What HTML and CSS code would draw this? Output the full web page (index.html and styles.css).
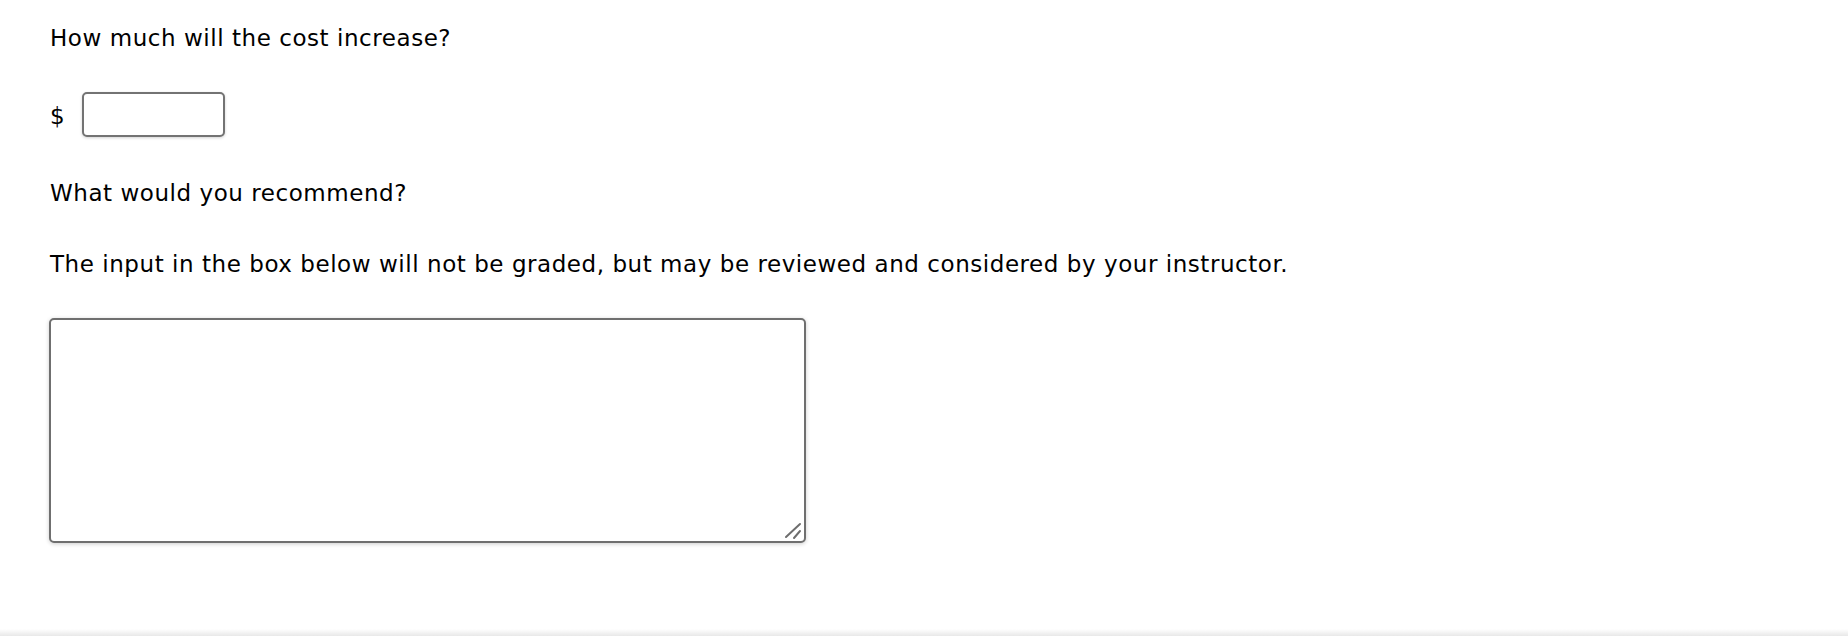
FILE: index.html
```html
<!DOCTYPE html>
<html lang="en">
<head>
<meta charset="utf-8">
<title>Question</title>
<link rel="stylesheet" href="styles.css">
</head>
<body>
<main class="page">
  <p class="prompt">How much will the cost increase?</p>
  <div class="answer-row">
    <span class="currency">$</span>
    <input class="num-input" type="text" aria-label="Cost increase">
  </div>
  <p class="prompt prompt-second">What would you recommend?</p>
  <p class="prompt prompt-note">The input in the box below will not be graded, but may be reviewed and considered by your instructor.</p>
  <div class="comment-wrap">
    <textarea class="comment-box" aria-label="Recommendation"></textarea>
    <svg class="grip" width="20" height="20" viewBox="0 0 20 20" aria-hidden="true">
      <line x1="2" y1="16" x2="16" y2="3" stroke="#6e6e6e" stroke-width="2" stroke-linecap="round"/>
      <line x1="10" y1="17" x2="16" y2="10" stroke="#6e6e6e" stroke-width="2" stroke-linecap="round"/>
    </svg>
  </div>
</main>
<div class="bottom-shade"></div>
</body>
</html>
```

FILE: styles.css
```css
html, body {
  margin: 0;
  padding: 0;
  height: 100%;
}
body {
  background: #ffffff;
  color: #000000;
  font-family: "DejaVu Sans", Verdana, sans-serif;
  font-size: 23px;
  letter-spacing: 0.55px;
  display: flex;
  flex-direction: column;
  min-height: 100vh;
}
.page {
  padding: 25px 50px 0;
  flex: 1;
  display: flex;
  flex-direction: column;
  align-items: flex-start;
}
.prompt {
  margin: 0;
  line-height: 27px;
}
.answer-row {
  display: flex;
  align-items: center;
  gap: 17px;
  margin-top: 40px;
  height: 45px;
}
.currency {
  line-height: 27px;
  margin-top: 4px;
}
.num-input {
  box-sizing: border-box;
  width: 143px;
  height: 45px;
  border: 2px solid #737373;
  border-radius: 5px;
  box-shadow: 0 1px 3px rgba(0,0,0,0.18);
  background: #fff;
  margin: 0;
  padding: 0 6px;
  font: inherit;
}
.prompt-second {
  margin-top: 43px;
}
.prompt-note {
  margin-top: 44px;
}
.comment-wrap {
  position: relative;
  margin: 40px 0 0 -1px;
  width: 757px;
  height: 225px;
}
.comment-box {
  display: block;
  box-sizing: border-box;
  width: 100%;
  height: 100%;
  margin: 0;
  border: 2px solid #6f6f6f;
  border-radius: 5px;
  box-shadow: 0 1px 4px rgba(0,0,0,0.2);
  background: #fff;
  resize: none;
  font: inherit;
  padding: 6px;
}
.grip {
  position: absolute;
  right: 2px;
  bottom: 2px;
  pointer-events: none;
}
.bottom-shade {
  height: 7px;
  flex: none;
  background: linear-gradient(to bottom, rgba(255,255,255,0), #e8e8e8);
}
```
